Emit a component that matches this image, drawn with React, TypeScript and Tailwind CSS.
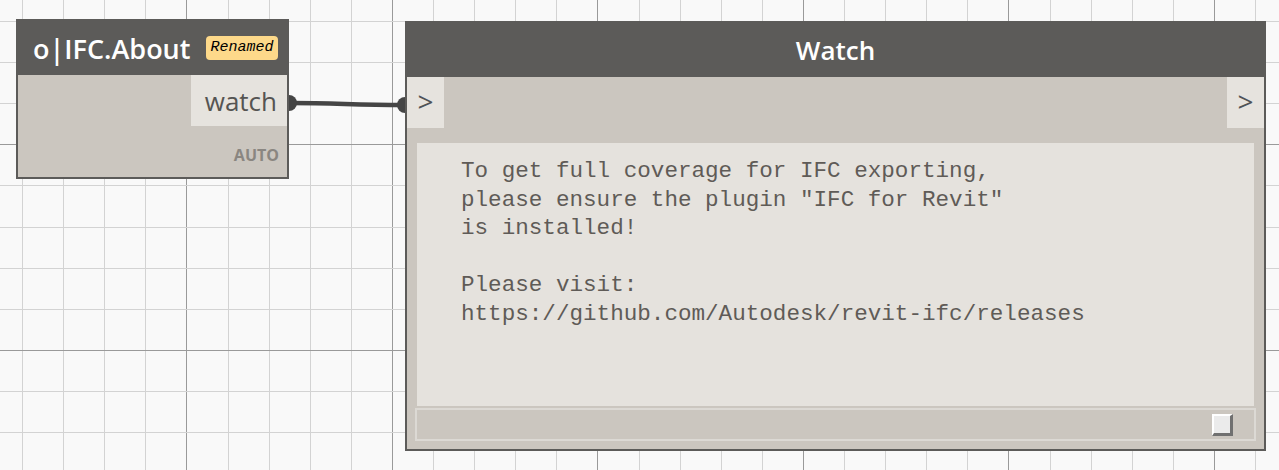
import React from 'react';

const SANS = { fontFamily: '"Open Sans", "Noto Sans", sans-serif' };

// Canvas grid: one cell is about 41.1px, every fifth line is darker.
const GridBackground: React.FC = () => {
  const cols = Array.from({ length: 31 }, (_, k) => ({ x: Math.round(22 + 41.1 * k) + 0.5, major: k % 5 === 4 }));
  const rows = Array.from({ length: 12 }, (_, k) => ({ y: Math.round(21 + 41.1 * k) + 0.5, major: k % 5 === 3 }));
  return (
    <svg className="absolute inset-0" width="1279" height="470" shapeRendering="crispEdges">
      {cols.map((c) => (
        <line key={'c' + c.x} x1={c.x} y1={0} x2={c.x} y2={470} stroke={c.major ? '#9a9a9a' : '#d3d3d3'} strokeWidth={1} />
      ))}
      {rows.map((r) => (
        <line key={'r' + r.y} x1={0} y1={r.y} x2={1279} y2={r.y} stroke={r.major ? '#9a9a9a' : '#d3d3d3'} strokeWidth={1} />
      ))}
    </svg>
  );
};

const Wire: React.FC = () => (
  <svg className="absolute inset-0" width="1279" height="470">
    <path d="M289 103 C 340 103, 350 105, 405 105" fill="none" stroke="#454545" strokeWidth={4.5} />
    <circle cx={289} cy={103} r={8} fill="#454545" />
    <circle cx={405} cy={105} r={8} fill="#454545" />
  </svg>
);

const AboutNode: React.FC = () => (
  <div className="absolute left-[16px] top-[19px] flex h-[160px] w-[273px] flex-col border-2 border-[#5c5b59] bg-[#cbc6bf]" style={SANS}>
    <div className="flex h-[54px] items-center bg-[#5c5b59] pl-[15px] pr-[9px]">
      <span className="text-[27px] font-semibold leading-none text-white">o|IFC.About</span>
      <span
        className="ml-auto flex h-[24px] w-[72px] items-center justify-center rounded-[4px] bg-[#fdd98a] text-[15px] italic text-black"
        style={{ fontFamily: '"Liberation Mono", monospace' }}
      >
        Renamed
      </span>
    </div>
    <div className="flex h-[51px] justify-end">
      <div className="flex w-[96px] items-center justify-end bg-[#e6e3de] pr-[10px] text-[26px] leading-none text-[#555452]">watch</div>
    </div>
    <div className="flex flex-1 items-end justify-end pb-[14px] pr-[8px]">
      <span className="text-[16px] font-bold leading-none text-[#8a8681]">AUTO</span>
    </div>
  </div>
);

const lines = [
  'To get full coverage for IFC exporting,',
  'please ensure the plugin "IFC for Revit"',
  'is installed!',
  '',
  'Please visit:',
  'https://github.com/Autodesk/revit-ifc/releases',
];

const WatchNode: React.FC = () => (
  <div className="absolute left-[405px] top-[21px] flex h-[430px] w-[861px] flex-col border-2 border-[#5c5b59] bg-[#cbc6bf]" style={SANS}>
    <div className="flex h-[54px] items-center justify-center bg-[#5c5b59]">
      <span className="text-[26px] font-semibold leading-none text-white">Watch</span>
    </div>
    <div className="flex h-[51px] justify-between">
      <div className="flex w-[37px] items-center justify-center bg-[#e6e3de] pb-[3px] text-[28px] leading-none text-[#4f5357]">&gt;</div>
      <div className="flex w-[37px] items-center justify-center bg-[#e6e3de] pb-[3px] text-[28px] leading-none text-[#4f5357]">&gt;</div>
    </div>
    <div
      className="mx-[10px] mt-[15px] h-[263px] bg-[#e5e2dd] pl-[44px] pt-[14px] text-[22.6px] leading-[28.5px] text-[#5f5b57]"
      style={{ fontFamily: '"Liberation Mono", "DejaVu Sans Mono", monospace' }}
    >
      {lines.map((l, i) => (
        <div key={i} className="h-[28.5px] whitespace-pre">{l}</div>
      ))}
    </div>
    <div className="mx-[8px] mt-[2px] flex h-[33px] items-center justify-end border-2 border-[#dcd9d4] bg-[#cbc6bf] pr-[21px]">
      <div className="h-[22px] w-[21px] border-b-[3px] border-l-2 border-r-[3px] border-t-2 border-b-[#707070] border-l-white border-r-[#707070] border-t-white bg-[#ebebeb]" />
    </div>
  </div>
);

export default function App() {
  return (
    <div className="relative h-[470px] w-[1279px] overflow-hidden bg-[#f9f9f9]">
      <GridBackground />
      <Wire />
      <AboutNode />
      <WatchNode />
    </div>
  );
}
